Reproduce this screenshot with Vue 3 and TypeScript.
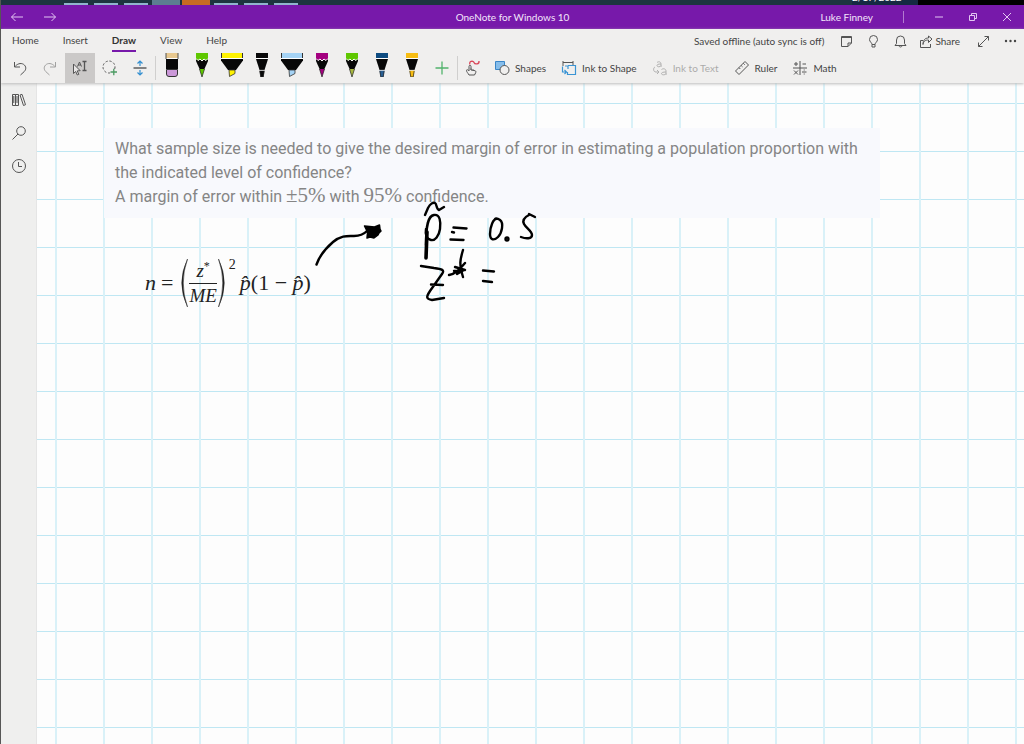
<script setup lang="ts">
import { ref } from 'vue'

type PenKind = 'pencil' | 'marker' | 'pen'
interface Pen { kind: PenKind; color: string; tip: string; label: string }

const tabs = ['Home', 'Insert', 'Draw', 'View', 'Help']
const active = ref('Draw')

const pens: Pen[] = [
  { kind: 'pencil', color: '#5fc700', tip: '#5fc700', label: 'Green pencil' },
  { kind: 'marker', color: '#fff200', tip: '#fff200', label: 'Yellow highlighter' },
  { kind: 'pen', color: '#0a0a0a', tip: '#0a0a0a', label: 'Black pen' },
  { kind: 'marker', color: '#a5d3f5', tip: '#a5d3f5', label: 'Blue highlighter' },
  { kind: 'pencil', color: '#a4007f', tip: '#a4007f', label: 'Plum pencil' },
  { kind: 'pencil', color: '#5fc700', tip: '#a8b840', label: 'Lime pencil' },
  { kind: 'pen', color: '#0f4c81', tip: '#2a5f92', label: 'Blue pen' },
  { kind: 'pen', color: '#f7bd13', tip: '#f7bd13', label: 'Gold pen' },
]

const tasks = ['none', 'line', 'line', 'line', 'window', 'alert', 'line', 'line', 'line']
</script>

<template>
  <div class="app">
    <div class="taskbar" aria-hidden="true">
      <div class="tasks"><i v-for="(t, i) in tasks" :key="i" :class="t"></i></div>
      <div class="date"><span>2/17/2022</span></div>
      <div class="dark"></div>
    </div>

    <header class="titlebar">
      <div class="nav">
        <button aria-label="Back"><svg width="14" height="12" viewBox="0 0 14 12"><path d="M13 6H1.500M5.500 2l-4 4 4 4" /></svg></button>
        <button aria-label="Forward"><svg width="14" height="12" viewBox="0 0 14 12"><path d="M1 6h11.500M8.500 2l4 4-4 4" /></svg></button>
      </div>
      <h1>OneNote for Windows 10</h1>
      <div class="account">
        <span class="user">Luke Finney</span>
        <span class="bar"></span>
        <button aria-label="Minimize"><svg width="10" height="10" viewBox="0 0 10 10"><path d="M1 5h8" /></svg></button>
        <button aria-label="Restore"><svg width="10" height="10" viewBox="0 0 10 10"><path d="M1.500 3.500h5v5h-5zM3.500 3V1.500h5v5H7" /></svg></button>
        <button aria-label="Close"><svg width="10" height="10" viewBox="0 0 10 10"><path d="M1 1l8 8M9 1L1 9" /></svg></button>
      </div>
    </header>

    <div class="ribbon">
      <div class="tabrow">
        <nav class="tabs">
          <button v-for="t in tabs" :key="t" :class="{ on: active === t }" @click="active = t">{{ t }}</button>
        </nav>
        <div class="status">
          <span class="saved">Saved offline (auto sync is off)</span>
          <button class="sq" aria-label="Feed"><svg width="13" height="13" viewBox="0 0 13 13"><path d="M1.500 1.500h10v6.500l-3.500 3.500H1.500zM11.500 8H8v3.500M1.500 2.500h10" /></svg></button>
          <button class="sq" aria-label="Tell me"><svg width="13" height="13" viewBox="0 0 13 13"><path d="M5 9.500C5 7.500 2.500 7 2.500 4.500a4 4 0 0 1 8 0C10.500 7 8 7.500 8 9.500zM5 9.500v2.500h3V9.500" /></svg></button>
          <button class="sq" aria-label="Notifications"><svg width="13" height="13" viewBox="0 0 13 13"><path d="M1 10.500h11L10.500 8.500V5a4 4 0 0 0-8 0v3.500zM5 10.500c0 2 3 2 3 0" /></svg></button>
          <button class="share"><svg width="13" height="13" viewBox="0 0 13 13"><path d="M3 5.500H.5v7h10V9M3 9.500c.5-3.500 2.500-4.500 5.500-4.500v2.500L12 4 8.500 1v2C5 3 3 5 3 9.500z" /></svg>Share</button>
          <button class="sq" aria-label="Full screen"><svg width="13" height="13" viewBox="0 0 13 13"><path d="M1.500 11.500l10-10M7.500 1.500h4v4M1.500 7.500v4h4" /></svg></button>
          <button class="sq more" aria-label="More"><svg width="13" height="4" viewBox="0 0 13 4"><circle cx="2" cy="2" r="1.200" /><circle cx="6.500" cy="2" r="1.200" /><circle cx="11" cy="2" r="1.200" /></svg></button>
        </div>
      </div>

      <div class="tools">
        <button class="tool" aria-label="Undo"><svg width="16" height="16" viewBox="0 0 16 16"><path d="M2.500 2v5H8M2.700 6.800C5 4 8.500 2.500 11.500 4.300c3 2 2.800 5.200.8 7.200L8.500 15" /></svg></button>
        <button class="tool off" aria-label="Redo"><svg width="16" height="16" viewBox="0 0 16 16"><path d="M13.500 2v5H8M13.300 6.800C11 4 7.500 2.500 4.500 4.300c-3 2-2.800 5.200-.8 7.200L7.500 15" /></svg></button>
        <button class="tool selected" aria-label="Select objects or type text">
          <svg width="16" height="16" viewBox="0 0 16 16"><path d="M1.500 4v9.500l2.200-2 1.600 3.500 1.500-.7-1.600-3.400 3-.2z" fill="#e8e6e6" /><path d="M5.500 6.500L7.500 2l2 4.500M6.200 5h2.600" /><path d="M10.500 1.500h4M12.500 1.500v9M10.500 10.500h4" stroke-width="1.300" /></svg>
        </button>
        <button class="tool" aria-label="Lasso select"><svg width="16" height="16" viewBox="0 0 16 16"><circle cx="7" cy="7" r="6" stroke-dasharray="2.200 1.800" /><path d="M9 12h6M12 9v6" stroke="#f0efee" stroke-width="3.500" /><path d="M8.500 12h6.500M11.800 8.800v6.500" stroke="#4b9b62" stroke-width="1.300" /></svg></button>
        <button class="tool" aria-label="Insert or remove space"><svg width="16" height="16" viewBox="0 0 16 16"><path d="M1.500 8h13" stroke="#777" stroke-width="1.800" /><path d="M8 6V1.200M5.500 3.500L8 1l2.500 2.500M8 10v4.800M5.500 12.500L8 15l2.500-2.500" stroke="#338fd0" stroke-width="1.200" /></svg></button>
        <span class="split wide"></span>
        <button class="tool pen" aria-label="Eraser">
          <svg width="24" height="24" viewBox="0 0 24 24"><path d="M6 0h12v5H6z" fill="#e8c88f" /><path d="M6 5h12v1H6z" fill="#fff" /><path d="M6 6h12v10H6z" fill="#080808" /><path d="M6.500 16.500h11V21q0 2.500-2.500 2.500H9q-2.500 0-2.500-2.500z" fill="#cb98d8" stroke="#333" /><path d="M6 0v6M18 0v6" stroke="#555" /></svg>
        </button>
        <button v-for="p in pens" :key="p.label" class="tool pen" :aria-label="p.label">
          <svg v-if="p.kind === 'pencil'" width="24" height="24" viewBox="0 0 24 24">
            <path d="M6 5h12v3l-4 9h-4L6 8z" fill="#080808" />
            <path d="M6 0h12v6l-2 1.500L14 6l-2 2-2-2-2 1.500L6 6z" :fill="p.color" />
            <path d="M6 5.500l2 2L10 6l2 2 2-2 2 1.500 2-2" stroke="#fff" />
            <path d="M9.500 16h5L12 24z" :fill="p.tip" /><path d="M9.500 16l2.500 8 2.500-8" stroke="#222" stroke-width=".7" />
          </svg>
          <svg v-else-if="p.kind === 'marker'" width="24" height="24" viewBox="0 0 24 24">
            <path d="M1.500 0h21v5h-21z" :fill="p.color" /><path d="M1.500 0v6M22.500 0v6" stroke="#333" />
            <path d="M1 5h22v1H1z" fill="#fff" /><path d="M1 6h22v1.500L16 17H8L1 7.500z" fill="#080808" />
            <path d="M9 17h6v3.500L9.500 23.500z" :fill="p.tip" stroke="#333" stroke-width=".8" />
          </svg>
          <svg v-else width="24" height="24" viewBox="0 0 24 24">
            <path d="M6 0h12v5H6z" :fill="p.color" /><path d="M6 5h12v1H6z" fill="#fff" />
            <path d="M6 6h12l-3.500 11h-5z" fill="#080808" />
            <path d="M9.500 17.500h5L13.500 24h-3z" :fill="p.tip" /><path d="M9.500 17.300h5" stroke="#ddd" stroke-width=".7" /><path d="M9.800 18l1 6h2.400l1-6" stroke="#222" stroke-width=".7" />
          </svg>
        </button>
        <button class="tool" aria-label="Add pen"><svg width="16" height="16" viewBox="0 0 16 16"><path d="M1.500 8h13M8 1.500v13" stroke="#52b36c" stroke-width="1.300" /></svg></button>
        <span class="split"></span>
        <button class="tool" aria-label="Draw with touch"><svg width="16" height="16" viewBox="0 0 16 16"><path d="M4 15C3 13 1.500 12 1.500 10.500c0-1.200 1.500-1 2.500.5V6.500c0-1.600 2-1.600 2 0V10l4 .7c1 .3 1 1 .7 2L9.500 15zM6 9.800V8.500M8 10.200v-1" /><path d="M5 4.500C3.500 1.500 8 0 9 2.500c.8 2.200 5.500 2 5-1.500" stroke="#d9485a" stroke-width="1.300" /></svg></button>
        <div class="actions">
          <button><svg width="16" height="16" viewBox="0 0 16 16"><path d="M1.500 1.500h9v8h-9z" fill="#86bdea" stroke="#3a86c8" /><circle cx="10.500" cy="10" r="4.500" fill="#f0efee" /></svg>Shapes</button>
          <button><svg width="16" height="16" viewBox="0 0 16 16"><path d="M2 2.500h10M2 1v3M12 1v3M2 4v2M12 4v1" /><path d="M7 5.500h7.500v9H6.500V12M1.500 6.500V12h4M3.500 10l2 2-2 2M4 6h3v3" stroke="#3a94d4" stroke-width="1.200" /></svg>Ink to Shape</button>
          <button disabled><svg width="16" height="16" viewBox="0 0 16 16"><path d="M5 2.500c2-1.500 4-.5 4 1.500v3M9 4C6 4 5 4.500 5 5.700S8 7.500 9 5.500M9.500 9.500c2-1.500 4.500-.5 4.500 1.500v4M14 12c-3 0-4.500.5-4.500 1.700s3.500 1.800 4.500-.2M3 7c-2 .8-2 5 1 5h3M5 10l2 2-2 2" /></svg>Ink to Text</button>
          <button><svg width="16" height="16" viewBox="0 0 16 16"><path d="M1.500 11L11 1.500 14.500 5 5 14.500zM5 7.700l1.300 1.300M7.200 5.500l1.300 1.300M9.300 3.300l1.400 1.400" /></svg>Ruler</button>
          <button><svg width="16" height="16" viewBox="0 0 16 16"><path d="M1 8h14M8 1v14M2 4h4M4 2v4M10.500 4h3.500M2 10.500l4 4M6 10.500l-4 4M10 12h4.500M12.200 9.500v1M12.200 13.500v1" /></svg>Math</button>
        </div>
      </div>
    </div>

    <div class="body">
      <aside class="side">
        <button aria-label="Notebooks"><svg width="16" height="16" viewBox="0 0 16 16"><path d="M1.500 2.500h3v11h-3zM4.500 2.500h3v11h-3zM9 3l2-.7 3.500 10.400-2 .8zM2.800 4v7M6 4v7" /></svg></button>
        <button aria-label="Search"><svg width="16" height="16" viewBox="0 0 16 16"><circle cx="10" cy="6" r="4.300" /><path d="M7 9l-5.500 5.500" /></svg></button>
        <button aria-label="Recent notes"><svg width="16" height="16" viewBox="0 0 16 16"><circle cx="8" cy="8" r="6.500" /><path d="M7.500 4v4.500H11" /></svg></button>
      </aside>
      <main class="page">
        <p class="question">What sample size is needed to give the desired margin of error in estimating a population proportion with<br />the indicated level of confidence?<br />A margin of error within <span class="num">±5%</span> with <span class="num">95%</span> confidence.</p>
        <div class="equation">
          <i>n</i><span class="eq">=</span>
          <svg class="paren" width="8" height="50" viewBox="0 0 8 50"><path d="M7.500 1Q-4 25 7.500 49Q-1 25 7.500 1z" /></svg>
          <span class="frac"><span><i>z</i><sup>*</sup></span><i>ME</i></span>
          <svg class="paren" width="8" height="50" viewBox="0 0 8 50"><path d="M.5 1Q12 25 .5 49Q9 25 .5 1z" /></svg>
          <span class="power">2</span>
          <span class="tail"><i>p̂</i>(1 − <i>p̂</i>)</span>
        </div>
        <svg class="ink" width="250" height="120" viewBox="300 190 250 120" role="img" aria-label="Handwritten: p hat = 0.5, z* =">
          <path d="M316.500 264.500C319 257 325 249 333 242S348 236 354 236s9-1 13-5" />
          <path d="M364.500 226l10 1 5-2 .5 4 1 2-2 2-1 2-4 3-4-1-3 1 .5-5-1-3z" fill="#000" stroke-width="1.500" />
          <path d="M425 215l3-7c2-4 5-6 7-5s1 6 4 7l5-3" />
          <path d="M426 258L427 232" stroke-width="3.600" /><path d="M426 245C426 225 428 216 434 215s7 7 6 14-5 12-9 11-6-5-5-11" />
          <path d="M453.500 227.500l13 1M452 232l2 .5M450.500 239.500l13 .5" />
          <path d="M498 219c-5-2-8 9-8 15s4 7 8 3 6-14 2-17-5-1-5-1" /><circle cx="507" cy="239" r="1.500" />
          <path d="M535 217l-6-3M529 215c-4 2-7 5-5 9s8 7 8 11-6 4-11 2" />
          <path d="M421 266l13 2c8 1 11 2 8 6l-12 17c-4 6-4 8 2 9l12-2M431 284.500l12 .5" />
          <path d="M463 250c-3 10-4 14 0 27M449 275c6-1 10-5 16-12M455 267l10 3M454 271l10-1-7 4" />
          <path d="M483 270.500l11 1M483 281l9 1" />
        </svg>
      </main>
    </div>
  </div>
</template>

<style>
html, body { margin: 0; height: 100%; }
#app { height: 100%; }
</style>

<style scoped>
.app { display: flex; flex-direction: column; min-height: 100vh; box-sizing: border-box; border-left: 1px solid #565656; font-family: Lato, "Open Sans", sans-serif; font-size: 10px; color: #444; background: #f0efee; overflow: hidden; }
button { display: inline-flex; align-items: center; border: 0; padding: 0; background: none; font: inherit; color: inherit; cursor: pointer; }
svg { display: block; flex: none; fill: none; stroke: #555; }
.taskbar { display: flex; height: 5px; background: #1d3540; overflow: hidden; }
.tasks { display: flex; gap: 2px; padding-left: 31px; flex: 1; }
.tasks i { width: 28px; height: 5px; box-sizing: border-box; }
.tasks .line { border: solid transparent; border-width: 0 2px; background: linear-gradient(#1d3540 3px, #91b5ce 3px) padding-box; }
.tasks .window { background: #5c7d91; }
.tasks .alert { background: #c76b23; }
.date { width: 66px; height: 5px; background: #142a42; color: #fff; overflow: hidden; display: flex; align-items: flex-end; line-height: 12px; }
.date span { padding-bottom: 2px; }
.dark { width: 106px; background: #000; }
.titlebar { display: grid; grid-template-columns: 1fr auto 1fr; align-items: center; height: 24px; background: #7719aa; color: #f4e6fb; }
.titlebar svg { stroke: #e3c6f2; }
.nav { display: flex; gap: 19px; padding-left: 9px; }
h1 { margin: 0; font-size: 10px; font-weight: 400; }
.account { display: flex; justify-content: flex-end; align-items: center; }
.user { margin-right: 30px; }
.bar { width: 1px; height: 12px; background: #b37ad0; margin-right: 18px; }
.account button { width: 34px; height: 24px; justify-content: center; }
.ribbon { position: relative; z-index: 1; background: #f0efee; box-shadow: 0 1px 3px #bbb; }
.tabrow { display: flex; justify-content: space-between; height: 24px; }
.tabs { display: flex; gap: 24px; padding-left: 11px; }
.tabs button { height: 23px; border-bottom: 2px solid transparent; box-sizing: border-box; }
.tabs .on { font-weight: 700; border-color: #7719aa; color: #333; }
.status { display: flex; align-items: center; }
.saved { margin-right: 9px; }
.sq { width: 27px; height: 24px; justify-content: center; }
.share { gap: 2px; margin: 0 10px 0 6px; }
.more svg { fill: #444; stroke: none; }
.tools { display: flex; height: 30px; padding-left: 4px; }
.tool { width: 30px; height: 30px; justify-content: center; flex: none; }
.off { opacity: .5; }
.selected { background: #cbc9c8; }
.pen { align-items: flex-start; }
.pen svg { stroke: none; }
.split { width: 1px; height: 24px; margin-top: 3px; background: #d0cfce; }
.wide { margin-right: 1px; }
.actions { display: flex; gap: 15px; padding-left: 6px; }
.actions button { gap: 5px; white-space: nowrap; }
.actions button:disabled { opacity: .4; }
.body { flex: 1; display: flex; }
.side { width: 35px; flex: none; display: flex; flex-direction: column; align-items: center; gap: 1px; padding-top: 1px; background: #efefee; border-right: 1px solid #e5e5e5; }
.side button { width: 35px; height: 32px; justify-content: center; }
.page { position: relative; flex: 1; background-color: #fdfdfd; background-image: linear-gradient(90deg, #d9f1f8 2px, transparent 2px), linear-gradient(#bfe7f3 1px, transparent 1px); background-size: 48px 48px; background-position: 18px 0, 0 20px; }
.question { position: absolute; left: 67px; top: 45px; box-sizing: border-box; width: 776px; margin: 0; padding: 9px 11px; background: #f8f9fd; color: #858585; font: 16px/24px Roboto, sans-serif; white-space: nowrap; }
.num { font-family: "Liberation Serif", serif; font-size: 21px; line-height: 20px; }
.equation { position: absolute; left: 108px; top: 175px; display: flex; align-items: center; color: #222; font: 22px/24px "Liberation Serif", serif; }
.eq { margin: 0 7px 0 5px; }
.paren { fill: #222; stroke: #222; stroke-width: 0.5; }
.frac { display: flex; flex-direction: column; align-items: center; margin: 0 1px; line-height: 24px; font-size: 19px; }
.frac > :first-child { border-bottom: 1px solid #222; align-self: stretch; text-align: center; }
.frac sup { font-size: 12px; line-height: 12px; }
.power { align-self: flex-start; font-size: 14px; line-height: 14px; margin: 0 4px 0 3px; }
.ink { position: absolute; left: 263px; top: 107px; stroke: #000; stroke-width: 2.4; stroke-linecap: round; stroke-linejoin: round; }
</style>
